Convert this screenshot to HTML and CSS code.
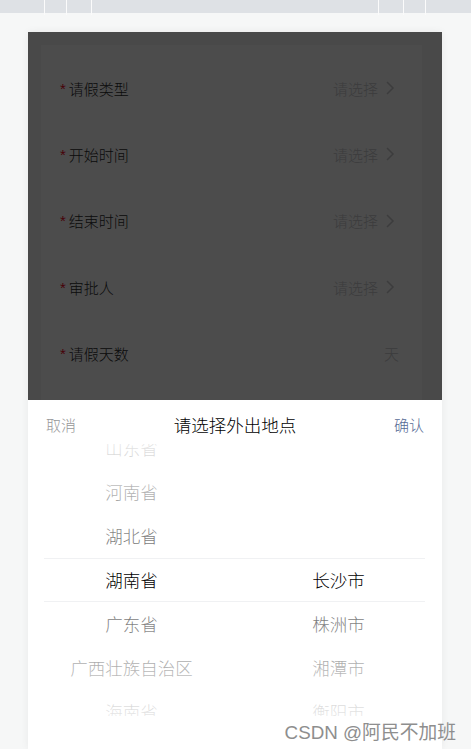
FILE: index.html
```html
<!DOCTYPE html>
<html lang="zh-CN">
<head>
  <meta charset="UTF-8">
  <meta name="viewport" content="width=device-width, initial-scale=1.0">
  <title>请假申请</title>
  <link rel="stylesheet" href="styles.css">
</head>
<body>
  <div class="topbar">
    <span class="tick t1"></span>
    <span class="tick t2"></span>
    <span class="tick t3"></span>
    <span class="tick t4"></span>
    <span class="tick t5"></span>
    <span class="tick t6"></span>
  </div>

  <div class="device">
    <!-- leave form -->
    <div class="form">
      <div class="cell">
        <span class="label"><i class="req">*</i>请假类型</span>
        <span class="value">请选择<svg class="arrow" width="10" height="16" viewBox="0 0 10 16"><path d="M2 2l6 6-6 6" fill="none" stroke="#c8c9cc" stroke-width="1.5"/></svg></span>
      </div>
      <div class="cell">
        <span class="label"><i class="req">*</i>开始时间</span>
        <span class="value">请选择<svg class="arrow" width="10" height="16" viewBox="0 0 10 16"><path d="M2 2l6 6-6 6" fill="none" stroke="#c8c9cc" stroke-width="1.5"/></svg></span>
      </div>
      <div class="cell">
        <span class="label"><i class="req">*</i>结束时间</span>
        <span class="value">请选择<svg class="arrow" width="10" height="16" viewBox="0 0 10 16"><path d="M2 2l6 6-6 6" fill="none" stroke="#c8c9cc" stroke-width="1.5"/></svg></span>
      </div>
      <div class="cell">
        <span class="label"><i class="req">*</i>审批人</span>
        <span class="value">请选择<svg class="arrow" width="10" height="16" viewBox="0 0 10 16"><path d="M2 2l6 6-6 6" fill="none" stroke="#c8c9cc" stroke-width="1.5"/></svg></span>
      </div>
      <div class="cell">
        <span class="label"><i class="req">*</i>请假天数</span>
        <span class="value unit">天</span>
      </div>
      <div class="cell"></div>
      <div class="cell"></div>
    </div>

    <div class="overlay"></div>

    <!-- area picker popup -->
    <div class="sheet">
      <div class="toolbar">
        <span class="btn cancel">取消</span>
        <span class="title">请选择外出地点</span>
        <span class="btn confirm">确认</span>
      </div>
      <div class="columns">
        <ul class="col col-province">
          <li>山东省</li>
          <li>河南省</li>
          <li>湖北省</li>
          <li class="active">湖南省</li>
          <li>广东省</li>
          <li>广西壮族自治区</li>
          <li>海南省</li>
        </ul>
        <ul class="col col-city">
          <li class="active">长沙市</li>
          <li>株洲市</li>
          <li>湘潭市</li>
          <li>衡阳市</li>
        </ul>
        <div class="mask mask-top"></div>
        <div class="mask mask-bottom"></div>
        <div class="frame"></div>
      </div>
    </div>
  </div>

  <div class="watermark">CSDN @阿民不加班</div>
</body>
</html>
```

FILE: styles.css
```css
* {
  box-sizing: border-box;
}

body {
  margin: 0;
  width: 471px;
  height: 749px;
  overflow: hidden;
  position: relative;
  background-color: #f6f7f7;
  font-family: "Noto Sans CJK SC", "Liberation Sans", sans-serif;
  font-weight: 300;
  color: #323233;
}

.topbar {
  display: flex;
  height: 13px;
  background-color: #dee1e5;
}

.tick {
  width: 1px;
  height: 15px;
  background-color: #fbfbfb;
}

.t1 { margin-left: 44px; }
.t2 { margin-left: 21px; }
.t3 { margin-left: 24px; }
.t4 { margin-left: auto; }
.t5 { margin-left: 24px; }
.t6 { margin-left: 21px; margin-right: 45px; }

.device {
  position: relative;
  margin: 19px 0 0 28px;
  width: 414px;
  height: 717px;
  overflow: hidden;
  background-color: #f4f5f6;
  box-shadow: 0 0 8px rgba(0, 0, 0, 0.06);
}

.form {
  margin: 13px 20px 0 13px;
  padding: 10px 0 0;
  background-color: #ffffff;
}

.cell {
  display: flex;
  align-items: center;
  justify-content: space-between;
  height: 66.3px;
  padding: 0 27px 0 19px;
  font-size: 15px;
}

.label {
  display: flex;
  align-items: center;
  color: #2b2b2c;
}

.req {
  font-style: normal;
  color: #ee0a24;
  font-family: "Liberation Sans", sans-serif;
  margin-right: 3px;
}

.value {
  display: flex;
  align-items: center;
  color: #c8c9cc;
}

.arrow {
  margin-left: 7px;
}

.unit {
  margin-right: -4px;
}

.overlay {
  position: absolute;
  inset: 0;
  background-color: rgba(0, 0, 0, 0.7);
}

.sheet {
  position: absolute;
  left: 0;
  right: 0;
  bottom: 0;
  height: 349px;
  background-color: #ffffff;
}

.toolbar {
  display: grid;
  grid-template-columns: 1fr auto 1fr;
  align-items: center;
  height: 44px;
  padding: 4px 18px 0;
}

.btn {
  font-size: 15px;
}

.cancel {
  color: #969799;
}

.confirm {
  color: #576b95;
  justify-self: end;
}

.title {
  font-size: 17.5px;
  color: #000000;
}

.columns {
  position: relative;
  display: flex;
  height: 272px;
  overflow: hidden;
}

.col {
  flex: 1;
  margin: 0;
  padding: 0;
  list-style: none;
}

.col li {
  height: 44px;
  line-height: 44px;
  text-align: center;
  font-size: 17.5px;
  color: #000000;
  white-space: nowrap;
}

.col-province {
  margin-top: -18px;
}

.col-city {
  margin-top: 114px;
}

.mask {
  position: absolute;
  left: 0;
  right: 0;
  height: 114px;
  pointer-events: none;
}

.mask-top {
  top: 0;
  background: linear-gradient(180deg, rgba(255, 255, 255, 0.9), rgba(255, 255, 255, 0.4));
}

.mask-bottom {
  bottom: 0;
  background: linear-gradient(0deg, rgba(255, 255, 255, 0.9), rgba(255, 255, 255, 0.4));
}

.frame {
  position: absolute;
  top: 114px;
  left: 16px;
  right: 17px;
  height: 44px;
  border-top: 1px solid #f0f1f3;
  border-bottom: 1px solid #f0f1f3;
  pointer-events: none;
}

.watermark {
  position: absolute;
  right: 15px;
  top: 717px;
  font-family: "Liberation Sans", "Noto Sans CJK SC", sans-serif;
  font-weight: 400;
  font-size: 18.8px;
  color: #8e8e8e;
  white-space: nowrap;
}
```
